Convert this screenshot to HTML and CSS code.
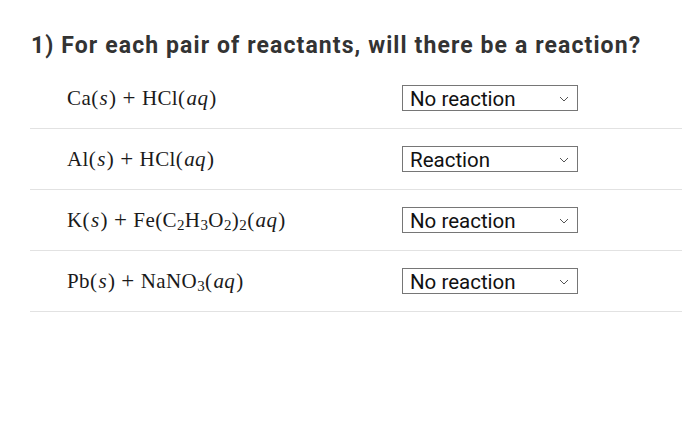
FILE: index.html
```html
<!DOCTYPE html>
<html>
<head>
<meta charset="utf-8">
<link rel="stylesheet" href="styles.css">
</head>
<body>
<div class="wrap">
  <h1 class="title">1) For each pair of reactants, will there be a reaction?</h1>
  <div class="list">
    <div class="row">
      <div class="eq">Ca(<i>s</i>)<span class="op">+</span>HCl(<i>aq</i>)</div>
      <div class="sel"><span>No reaction</span><svg class="chev" width="10" height="6" viewBox="0 0 10 6"><path d="M1 1 L5 5 L9 1" fill="none" stroke="#555" stroke-width="1"/></svg></div>
    </div>
    <div class="row">
      <div class="eq">Al(<i>s</i>)<span class="op">+</span>HCl(<i>aq</i>)</div>
      <div class="sel"><span>Reaction</span><svg class="chev" width="10" height="6" viewBox="0 0 10 6"><path d="M1 1 L5 5 L9 1" fill="none" stroke="#555" stroke-width="1"/></svg></div>
    </div>
    <div class="row">
      <div class="eq">K(<i>s</i>)<span class="op">+</span>Fe(C<sub>2</sub>H<sub>3</sub>O<sub>2</sub>)<sub>2</sub>(<i>aq</i>)</div>
      <div class="sel"><span>No reaction</span><svg class="chev" width="10" height="6" viewBox="0 0 10 6"><path d="M1 1 L5 5 L9 1" fill="none" stroke="#555" stroke-width="1"/></svg></div>
    </div>
    <div class="row">
      <div class="eq">Pb(<i>s</i>)<span class="op">+</span>NaNO<sub>3</sub>(<i>aq</i>)</div>
      <div class="sel"><span>No reaction</span><svg class="chev" width="10" height="6" viewBox="0 0 10 6"><path d="M1 1 L5 5 L9 1" fill="none" stroke="#555" stroke-width="1"/></svg></div>
    </div>
  </div>
</div>
</body>
</html>
```
FILE: styles.css
```css
html, body {
  margin: 0;
  padding: 0;
  background: #fff;
}
.wrap {
  padding-left: 30px;
  padding-top: 31px;
}
.title {
  margin: 0 0 0 1px;
  font-family: Roboto, "Liberation Sans", sans-serif;
  font-weight: 700;
  font-size: 23px;
  letter-spacing: 1.1px;
  line-height: 30px;
  color: #333;
  height: 37px;
}
.row {
  display: flex;
  align-items: center;
  height: 60px;
  border-bottom: 1px solid #e2e2e2;
}
.eq {
  width: 335px;
  padding-left: 37px;
  font-family: "Liberation Serif", "DejaVu Serif", serif;
  font-size: 21px;
  letter-spacing: 0.4px;
  color: #1a1a1a;
  white-space: nowrap;
}
.eq i {
  font-style: italic;
  margin: 0 1px;
}
.eq .op {
  margin: 0 6px;
  font-size: 23px;
}
.eq sub {
  font-size: 15px;
  vertical-align: -3px;
  line-height: 0;
}
.sel {
  box-sizing: border-box;
  width: 176px;
  height: 26px;
  border: 1px solid #767676;
  display: flex;
  align-items: center;
  justify-content: space-between;
  padding: 1px 8px 0 7px;
  font-family: Roboto, "Liberation Sans", sans-serif;
  font-size: 20.5px;
  color: #111;
}
.chev {
  display: block;
}
```
